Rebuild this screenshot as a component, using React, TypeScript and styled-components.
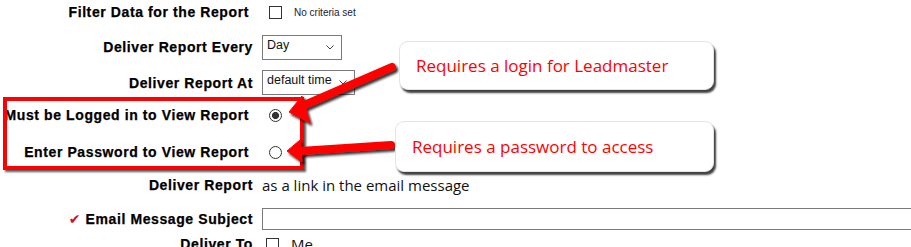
import styled, { createGlobalStyle } from 'styled-components'

const GlobalStyle = createGlobalStyle`
  html, body {
    margin: 0;
    padding: 0;
    background: #fff;
    overflow: hidden;
  }
  body {
    font-family: 'Liberation Sans', Arial, sans-serif;
    color: #000;
  }
`

const Page = styled.div`
  position: relative;
  width: 911px;
  height: 247px;
  overflow: hidden;
`

const Form = styled.div`
  display: flex;
  flex-direction: column;
`

const Row = styled.div<{ $h: number }>`
  display: grid;
  grid-template-columns: 253px 1fr;
  column-gap: 9px;
  align-items: center;
  height: ${(p) => p.$h}px;
`

const Label = styled.div<{ $pad?: number }>`
  text-align: right;
  font-weight: 700;
  font-size: 14px;
  letter-spacing: 0.6px;
  white-space: nowrap;
  padding-right: ${(p) => p.$pad ?? 0}px;
  display: flex;
  justify-content: flex-end;
  align-items: center;
  gap: 5px;
  -webkit-text-stroke: 0.25px #000;
`

const Check = styled.span`
  color: #d0101c;
  font-family: 'DejaVu Sans', sans-serif;
  font-size: 14px;
  letter-spacing: 0;
  -webkit-text-stroke: 0;
`

const Value = styled.div<{ $indent?: number }>`
  display: flex;
  align-items: center;
  gap: 12px;
  padding-left: ${(p) => p.$indent ?? 0}px;
  white-space: nowrap;
`

const Box = styled.span`
  display: inline-block;
  width: 11px;
  height: 11px;
  border: 1px solid #333;
  background: #fff;
`

const Tiny = styled.span`
  font-size: 10px;
  color: #1a1a3a;
`

const Plain = styled.span`
  font-family: 'Open Sans', 'Noto Sans', sans-serif;
  font-size: 15px;
  color: #111;
`

const SelectBox = styled.div<{ $w: number }>`
  position: relative;
  box-sizing: border-box;
  width: ${(p) => p.$w}px;
  height: 25px;
  border: 1px solid #7a7a7a;
  background: #fff;
  font-size: 12.5px;
  line-height: 19px;
  padding-left: 4px;
  color: #111;
`

const Chevron = styled.svg`
  position: absolute;
  right: 7px;
  top: 9px;
`

const Radio = styled.span<{ $on?: boolean }>`
  display: inline-block;
  box-sizing: border-box;
  width: 13px;
  height: 13px;
  border-radius: 50%;
  border: 1px solid #333;
  background: ${(p) =>
    p.$on ? 'radial-gradient(circle, #333 0 3.3px, #fff 3.8px)' : '#fff'};
`

const TextInput = styled.div`
  box-sizing: border-box;
  width: 680px;
  height: 22px;
  border: 1px solid #7a7a7a;
  border-width: 1px 0 1px 1px;
  background: #fff;
`

const Highlight = styled.div`
  position: absolute;
  left: 3px;
  top: 97px;
  width: 301px;
  height: 73px;
  box-sizing: border-box;
  border: 4px solid #ff0000;
  box-shadow: 2px 2px 2px rgba(0, 0, 0, 0.65);
`

const Callout = styled.div<{ $x: number; $y: number; $w: number; $h: number }>`
  position: absolute;
  left: ${(p) => p.$x}px;
  top: ${(p) => p.$y}px;
  width: ${(p) => p.$w}px;
  height: ${(p) => p.$h}px;
  box-sizing: border-box;
  background: #fff;
  border: 1px solid #e4e4e4;
  border-radius: 9px;
  box-shadow: 2px 3px 2px rgba(0, 0, 0, 0.75);
  display: flex;
  align-items: center;
  padding-left: 16px;
  font-family: 'Open Sans', 'Noto Sans', sans-serif;
  font-size: 17px;
  color: #f00;
`

const Arrows = styled.svg`
  position: absolute;
  left: 0;
  top: 0;
`

export default function App() {
  return (
    <Page>
      <GlobalStyle />
      <Form>
        <Row $h={24}>
          <Label $pad={4}>Filter Data for the Report</Label>
          <Value $indent={7}>
            <Box />
            <Tiny>No criteria set</Tiny>
          </Value>
        </Row>
        <Row $h={46}>
          <Label>Deliver Report Every</Label>
          <Value>
            <SelectBox $w={80}>
              Day
              <Chevron width="8" height="5" viewBox="0 0 8 5">
                <path d="M0.5 0.5 L4 4 L7.5 0.5" fill="none" stroke="#444" strokeWidth="1" />
              </Chevron>
            </SelectBox>
          </Value>
        </Row>
        <Row $h={18}>
          <Label>Deliver Report At</Label>
          <Value>
            <SelectBox $w={93}>
              default time
              <Chevron width="8" height="5" viewBox="0 0 8 5">
                <path d="M0.5 0.5 L4 4 L7.5 0.5" fill="none" stroke="#444" strokeWidth="1" />
              </Chevron>
            </SelectBox>
          </Value>
        </Row>
        <Row $h={54}>
          <Label $pad={4}>Must be Logged in to View Report</Label>
          <Value $indent={7}>
            <Radio $on />
          </Value>
        </Row>
        <Row $h={20}>
          <Label $pad={4}>Enter Password to View Report</Label>
          <Value $indent={7}>
            <Radio />
          </Value>
        </Row>
        <Row $h={46}>
          <Label>Deliver Report</Label>
          <Value>
            <Plain>as a link in the email message</Plain>
          </Value>
        </Row>
        <Row $h={14}>
          <Label>
            <Check>✔</Check>
            Email Message Subject
          </Label>
          <Value>
            <TextInput />
          </Value>
        </Row>
        <Row $h={44}>
          <Label>Deliver To</Label>
          <Value $indent={4}>
            <Box />
            <Plain>Me</Plain>
          </Value>
        </Row>
      </Form>

      <Highlight />

      <Arrows width="911" height="247" viewBox="0 0 911 247">
        <defs>
          <filter id="shade" x="-20%" y="-20%" width="140%" height="160%">
            <feDropShadow dx="2" dy="2.5" stdDeviation="1.2" floodColor="#000" floodOpacity="0.8" />
          </filter>
        </defs>
        <g filter="url(#shade)" fill="#ff0000" stroke="#ff0000">
          <line x1="392" y1="67" x2="302" y2="106" strokeWidth="8" strokeLinecap="round" />
          <polygon points="289,112 302,96 310,123" strokeWidth="1" strokeLinejoin="round" />
          <line x1="391" y1="145" x2="300" y2="151" strokeWidth="8" strokeLinecap="round" />
          <polygon points="287,151 300,140 302,162" strokeWidth="1" strokeLinejoin="round" />
        </g>
      </Arrows>

      <Callout $x={399} $y={41} $w={315} $h={49}>
        Requires a login for Leadmaster
      </Callout>
      <Callout $x={395} $y={121} $w={319} $h={51}>
        Requires a password to access
      </Callout>
    </Page>
  )
}
